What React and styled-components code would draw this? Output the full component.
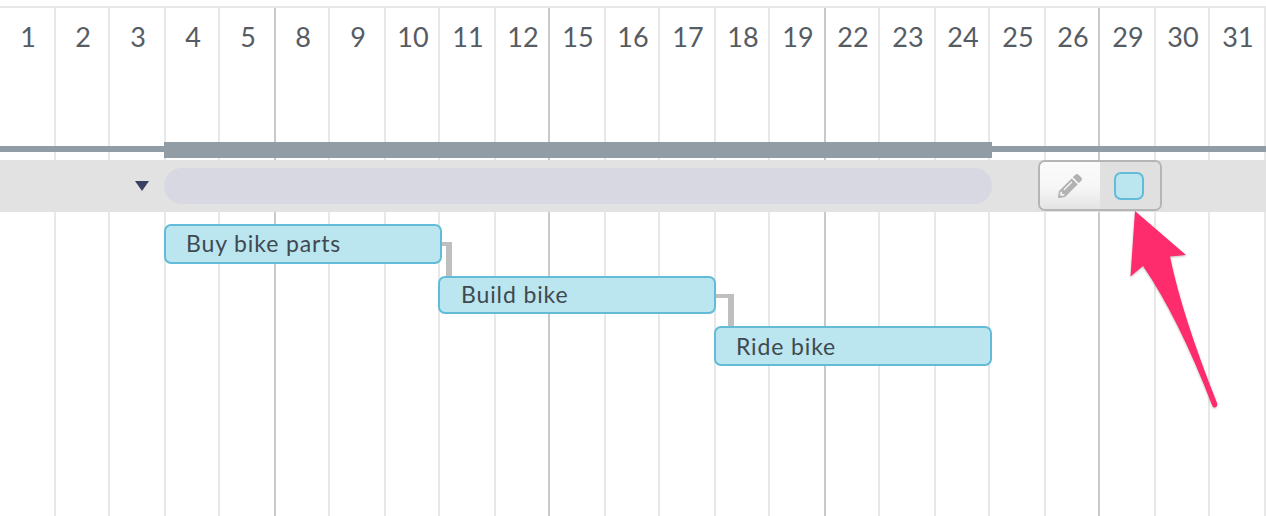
import React from "react";
import styled, { createGlobalStyle } from "styled-components";
import { FaPencilAlt } from "react-icons/fa";

const COL = 55;

const days = [1, 2, 3, 4, 5, 8, 9, 10, 11, 12, 15, 16, 17, 18, 19, 22, 23, 24, 25, 26, 29, 30, 31];

const tasks = [
    { name: "Buy bike parts", start: 4, height: 40, left: -1, right: -2, textLeft: 20, textBottom: 2, linkWidth: 10, linkHeight: 34 },
    { name: "Build bike", start: 9, height: 38, left: -2, right: -1, textLeft: 21, textBottom: 2, linkWidth: 18, linkHeight: 32 },
    { name: "Ride bike", start: 14, height: 40, left: -1, right: -2, textLeft: 20, textBottom: 0 },
];

// one 2px line at the end of each column, darker at the end of a week
// even columns land a pixel early, same as the real chart
const columnLines = days
    .map((d, i) => {
        const n = i + 1;
        const x = COL * n - (n % 2 === 0 ? 1 : 0);
        const color = n % 5 === 0 ? "#c9c9c9" : "#e8e8e8";
        return `transparent ${x - 1}px, ${color} ${x - 1}px, ${color} ${x + 1}px, transparent ${x + 1}px`;
    })
    .join(", ");

const GlobalStyle = createGlobalStyle`
    html, body {
        margin: 0;
        background: white;
        overflow: hidden;
    }
`;

const Page = styled.div`
    position: relative;
    width: 1266px;
    height: 516px;
    padding-top: 6px;
    box-sizing: border-box;
    overflow: hidden;
    font-family: "Lato", "Open Sans", sans-serif;
`;

const Chart = styled.div`
    height: 510px;
    border-top: 2px solid #e8e8e8;
    box-sizing: border-box;
    background-image: linear-gradient(to right, ${columnLines});
`;

const Columns = styled.div`
    display: grid;
    grid-template-columns: repeat(23, ${COL}px);
`;

const Header = styled(Columns)`
    height: 134px;
`;

const Day = styled.div`
    padding-top: 13px;
    padding-left: 1px;
    text-align: center;
    font-size: 27px;
    line-height: 32px;
    color: #565c63;
`;

const Summary = styled(Columns)`
    height: 16px;
    margin-bottom: 2px;
    background: linear-gradient(to bottom, transparent 4px, #919ca4 4px, #919ca4 10px, transparent 10px);
`;

const SummaryBar = styled.div`
    grid-column: 4 / span 15;
    margin-left: -1px;
    margin-right: -2px;
    background: #919ca4;
`;

const GroupRow = styled(Columns)`
    height: 52px;
    background: #e2e2e2;
    align-items: center;
`;

const Caret = styled.div`
    grid-column: 3;
    justify-self: end;
    margin-right: 16px;
    width: 0;
    height: 0;
    border-left: 7.5px solid transparent;
    border-right: 7.5px solid transparent;
    border-top: 10px solid #3a3f63;
`;

const GroupPill = styled.div`
    grid-column: 4 / span 15;
    margin-left: -1px;
    margin-right: -2px;
    height: 36px;
    border-radius: 18px;
    background: #d8d8e2;
`;

const Picker = styled.div`
    grid-column: 20 / span 2;
    align-self: start;
    margin-left: -7px;
    margin-right: -7px;
    height: 51px;
    display: flex;
    box-sizing: border-box;
    border: 2px solid #b5b5b5;
    border-radius: 7px;
    overflow: hidden;
`;

const PickerButton = styled.div`
    width: 60px;
    box-sizing: border-box;
    display: flex;
    align-items: center;
    justify-content: center;
    color: #b2b2b2;
    background: linear-gradient(to bottom, #fbfbfb 0, #f6f6f6 55%, #e4e4e4 100%);
`;

const PickerSwatchCell = styled.div`
    flex: 1;
    display: flex;
    align-items: center;
    justify-content: center;
    padding-right: 2px;
    background: #e0e0e0;
`;

const Swatch = styled.div`
    width: 30px;
    height: 28px;
    box-sizing: border-box;
    border: 2px solid #62bcd8;
    border-radius: 7px;
    background: #bbe5ef;
`;

const Tasks = styled.div`
    padding-top: 12px;
    display: flex;
    flex-direction: column;
    gap: 12px;
`;

const Task = styled.div`
    position: relative;
    grid-column: ${(p) => p.$start} / span 5;
    margin-left: ${(p) => p.$left}px;
    margin-right: ${(p) => p.$right}px;
    height: ${(p) => p.$height}px;
    box-sizing: border-box;
    padding-left: ${(p) => p.$textLeft}px;
    padding-bottom: ${(p) => p.$textBottom}px;
    display: flex;
    align-items: center;
    border: 2px solid #62bcd8;
    border-radius: 7px;
    background: #bbe5ef;
    font-size: 23px;
    letter-spacing: 0.87px;
    color: #3f4a50;

    ${(p) =>
        p.$linkWidth &&
        `&::after {
            content: "";
            position: absolute;
            left: calc(100% + 2px);
            top: 16px;
            width: ${p.$linkWidth}px;
            height: ${p.$linkHeight}px;
            box-sizing: border-box;
            border-top: 4px solid #bfbfbf;
            border-right: 6px solid #bfbfbf;
        }`}
`;

const Arrow = styled.svg`
    position: absolute;
    left: 1120px;
    top: 205px;
    filter: drop-shadow(0 1px 1px rgba(0, 0, 0, 0.25));
`;

const App = () => {
    return (
        <Page>
            <GlobalStyle />
            <Chart>
                <Header>
                    {days.map((d) => (
                        <Day key={d}>{d}</Day>
                    ))}
                </Header>
                <Summary>
                    <SummaryBar />
                </Summary>
                <GroupRow>
                    <Caret />
                    <GroupPill />
                    <Picker>
                        <PickerButton>
                            <FaPencilAlt size={24} />
                        </PickerButton>
                        <PickerSwatchCell>
                            <Swatch />
                        </PickerSwatchCell>
                    </Picker>
                </GroupRow>
                <Tasks>
                    {tasks.map((t) => (
                        <Columns key={t.name}>
                            <Task
                                $start={t.start}
                                $height={t.height}
                                $left={t.left}
                                $right={t.right}
                                $textLeft={t.textLeft}
                                $textBottom={t.textBottom}
                                $linkWidth={t.linkWidth}
                                $linkHeight={t.linkHeight}
                            >
                                {t.name}
                            </Task>
                        </Columns>
                    ))}
                </Tasks>
            </Chart>
            <Arrow width="110" height="215" viewBox="0 0 110 215">
                <path
                    d="M15 6 L66 50 L50 51.5 Q62 110 97 198 Q98 202 95 202.5 Q93 203 92 200 Q58 112 23 61 L10.500 71.500 Z"
                    fill="#fe2c6c"
                />
            </Arrow>
        </Page>
    );
};

export default App;
